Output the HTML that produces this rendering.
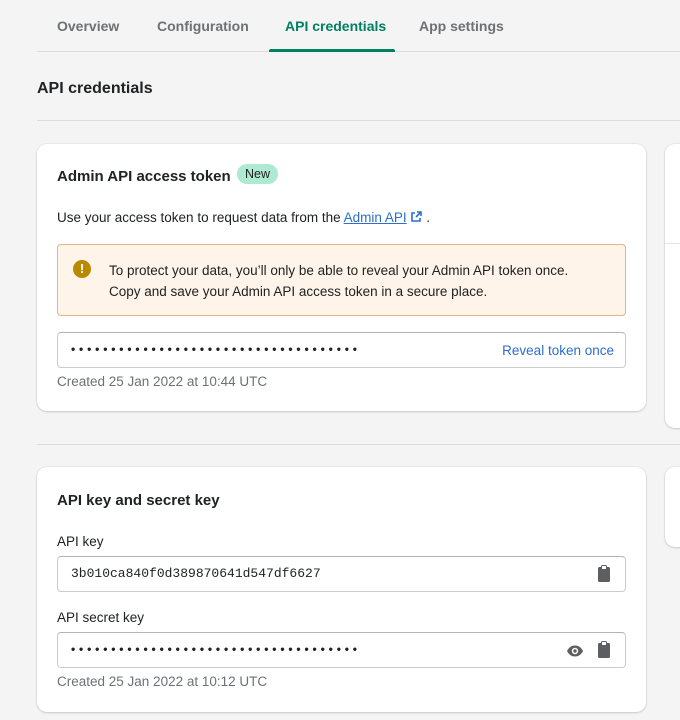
<!DOCTYPE html>
<html><head><style>
*{box-sizing:border-box;margin:0;padding:0}
body{width:680px;height:720px;background:#f4f4f4;font-family:"Liberation Sans",sans-serif;color:#202223;font-size:14px;position:relative;overflow:hidden}
.a{position:absolute;white-space:nowrap}
.tab{position:absolute;top:18px;font-size:14px;color:#6d7175;font-weight:bold}
.card{position:absolute;background:#fff;border-radius:10px;box-shadow:0 0 0 1px rgba(0,0,0,.04),0 1px 2px rgba(0,0,0,.15)}
.inp{position:absolute;left:57px;width:569px;height:36px;border:1px solid #c9cccf;border-top-color:#aeb4b9;border-radius:4px;background:#fff}
.dots{position:absolute;left:13px;top:9px;font-size:12px;letter-spacing:3.85px;color:#202223;font-weight:bold}
.sub{color:#6d7175}
</style></head><body>
<div class="tab" style="left:57px">Overview</div>
<div class="tab" style="left:157px">Configuration</div>
<div class="tab" style="left:285px;color:#008060">API credentials</div>
<div class="tab" style="left:419px">App settings</div>
<div class="a" style="left:37px;top:51px;width:643px;height:1px;background:#dcdcdc"></div>
<div class="a" style="left:269px;top:49px;width:126px;height:3px;background:#008060;border-radius:2px 2px 0 0"></div>
<div class="a" style="left:37px;top:80px;font-size:16px;font-weight:bold">API credentials</div>
<div class="a" style="left:37px;top:120px;width:643px;height:1px;background:#dcdcdc"></div>

<div class="card" style="left:37px;top:144px;width:609px;height:267px"></div>
<div class="card" style="left:665px;top:144px;width:40px;height:284px"></div>
<div class="a" style="left:665px;top:243px;width:20px;height:1px;background:#e1e3e5"></div>
<div class="a" style="left:57px;top:168px;font-size:15px;font-weight:bold">Admin API access token</div>
<div class="a" style="left:237px;top:164px;height:20px;padding:0 8px;line-height:20px;font-size:12.5px;background:#aee9d1;border-radius:10px;color:#202223">New</div>
<div class="a" style="left:57px;top:210px;font-size:13.5px">Use your access token to request data from the <span style="color:#2c6ecb;text-decoration:underline">Admin API</span> <svg width="12" height="12" viewBox="0 0 12 12" style="vertical-align:-1px"><path d="M7 1h4v4M11 1L6 6M5 2H2v8h8V7" fill="none" stroke="#2c6ecb" stroke-width="1.6"/></svg> .</div>
<div class="a" style="left:57px;top:244px;width:569px;height:72px;background:#fff4e9;border:1px solid #e1b878;border-radius:4px"></div>
<div class="a" style="left:73px;top:260px;width:18px;height:18px;border-radius:50%;background:#b98900;color:#fff;font-weight:bold;font-size:13px;text-align:center;line-height:18px">!</div>
<div class="a" style="left:109px;top:260px;font-size:13.5px;line-height:21px">To protect your data, you’ll only be able to reveal your Admin API token once.<br>Copy and save your Admin API access token in a secure place.</div>
<div class="inp" style="top:332px"><span class="dots">••••••••••••••••••••••••••••••••••••</span><span class="a" style="right:11px;top:10px;color:#2c6ecb;font-size:13.5px">Reveal token once</span></div>
<div class="a sub" style="left:57px;top:374px;font-size:13.5px">Created 25 Jan 2022 at 10:44 UTC</div>

<div class="a" style="left:37px;top:444px;width:643px;height:1px;background:#dcdcdc"></div>
<div class="card" style="left:37px;top:467px;width:609px;height:245px"></div>
<div class="card" style="left:665px;top:467px;width:40px;height:80px"></div>
<div class="a" style="left:57px;top:492px;font-size:15px;font-weight:bold">API key and secret key</div>
<div class="a" style="left:57px;top:534px;font-size:13.5px">API key</div>
<div class="inp" style="top:556px"><span class="a" style="left:13px;top:9px;font-family:'Liberation Mono',monospace;font-size:13px">3b010ca840f0d389870641d547df6627</span>
<svg class="a" style="right:14px;top:8px" width="14" height="18" viewBox="0 0 14 18"><rect x="1" y="2" width="12" height="15" rx="1.5" fill="#5c5f62"/><rect x="4.5" y="0.5" width="5" height="4" rx="1" fill="#fff" stroke="#5c5f62"/></svg></div>
<div class="a" style="left:57px;top:610px;font-size:13.5px">API secret key</div>
<div class="inp" style="top:632px"><span class="dots">••••••••••••••••••••••••••••••••••••</span>
<svg class="a" style="right:41px;top:10px" width="18" height="16" viewBox="0 0 18 16"><path d="M1 8C3 4 6 2.5 9 2.5S15 4 17 8C15 12 12 13.5 9 13.5S3 12 1 8z" fill="#5c5f62"/><circle cx="9" cy="8" r="3.2" fill="#fff"/><circle cx="9" cy="8" r="1.7" fill="#5c5f62"/></svg>
<svg class="a" style="right:14px;top:8px" width="14" height="18" viewBox="0 0 14 18"><rect x="1" y="2" width="12" height="15" rx="1.5" fill="#5c5f62"/><rect x="4.5" y="0.5" width="5" height="4" rx="1" fill="#fff" stroke="#5c5f62"/></svg></div>
<div class="a sub" style="left:57px;top:674px;font-size:13.5px">Created 25 Jan 2022 at 10:12 UTC</div>
</body></html>
